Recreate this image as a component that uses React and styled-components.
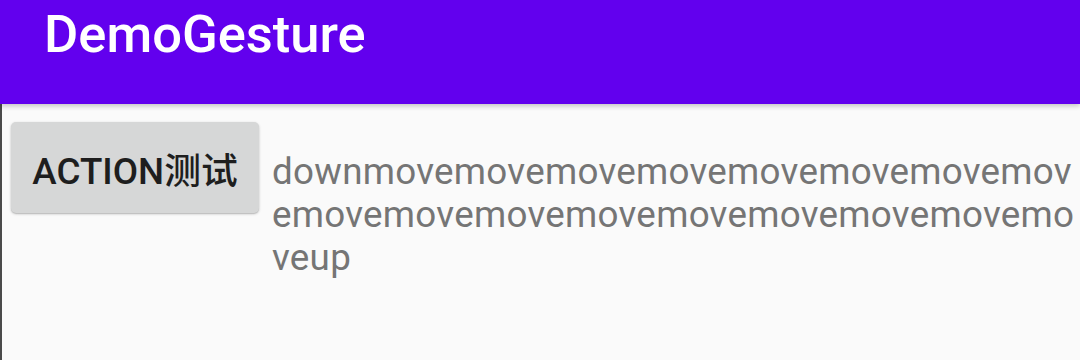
import React from "react";
import styled, { createGlobalStyle } from "styled-components";

const Global = createGlobalStyle`
  html, body { margin: 0; padding: 0; }
  body {
    width: 1080px;
    height: 360px;
    overflow: hidden;
    background: #fafafa;
    font-family: Roboto, "Noto Sans CJK SC", sans-serif;
  }
`;

const Screen = styled.div`
  width: 1080px;
  height: 360px;
  display: flex;
  flex-direction: column;
  background: #fafafa;
`;

const AppBar = styled.header`
  position: relative;
  z-index: 1;
  height: 104px;
  flex: none;
  background: #6200ee;
  box-sizing: border-box;
  padding: 8px 0 0 44px;
  box-shadow: 0 2px 5px rgba(0, 0, 0, 0.22);
`;

const Title = styled.h1`
  margin: 0;
  font-family: Roboto, sans-serif;
  font-weight: 500;
  font-size: 52.5px;
  line-height: 52.5px;
  color: #ffffff;
`;

const Content = styled.main`
  flex: 1;
  display: flex;
  align-items: baseline;
  gap: 13px;
  padding: 18px 4px 0 9px;
  border-left: 2px solid #4a4a4a;
`;

const ActionButton = styled.button`
  flex: none;
  display: inline-flex;
  align-items: center;
  justify-content: center;
  width: 248px;
  height: 91px;
  padding: 0;
  border: none;
  border-radius: 5px;
  background: #d6d7d7;
  box-shadow: 0 1px 3px rgba(0, 0, 0, 0.2), 0 1px 1px rgba(0, 0, 0, 0.12);
  font-family: Roboto, "Noto Sans CJK SC", sans-serif;
  font-weight: 500;
  font-size: 36.75px;
  color: #1e1e1e;
`;

const Log = styled.p`
  flex: 1;
  margin: 0;
  font-family: Roboto, sans-serif;
  font-size: 36.75px;
  line-height: 43px;
  letter-spacing: 0.28px;
  color: #757575;
  word-break: break-all;
`;

const events = ["down", ...Array(17).fill("move"), "up"].join("");

export default function App() {
  return (
    <>
      <Global />
      <Screen>
        <AppBar>
          <Title>DemoGesture</Title>
        </AppBar>
        <Content>
          <ActionButton>ACTION测试</ActionButton>
          <Log>{events}</Log>
        </Content>
      </Screen>
    </>
  );
}
